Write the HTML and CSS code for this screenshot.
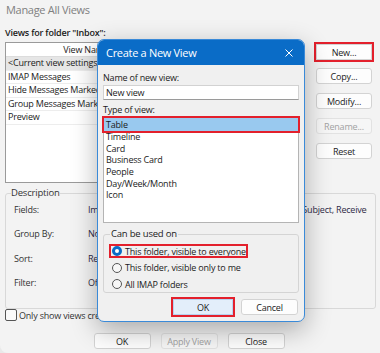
FILE: index.html
```html
<!DOCTYPE html>
<html>
  <head>
    <meta name="viewport" content="width=device-width, initial-scale=1.0">
    <link rel="stylesheet" href="styles.css">
  </head>
  <body>
    <div class="window">
      <div class="win-title">Manage All Views</div>
      <div class="win-body">
        <div class="top">
          <div class="views">
            <div class="caption">Views for folder "Inbox":</div>
            <div class="view-list">
              <div class="list-head"><span class="col-name">View Name</span><span>Can Be Used On</span></div>
              <div class="list-row current">&lt;Current view settings&gt;</div>
              <div class="list-row">IMAP Messages</div>
              <div class="list-row">Hide Messages Marked for Deletion</div>
              <div class="list-row">Group Messages Marked for Deletion</div>
              <div class="list-row">Preview</div>
            </div>
          </div>
          <div class="side-buttons">
            <button class="btn marked">New...</button>
            <button class="btn">Copy...</button>
            <button class="btn">Modify...</button>
            <button class="btn" disabled>Rename...</button>
            <button class="btn">Reset</button>
          </div>
        </div>
        <fieldset class="description">
          <legend>Description</legend>
          <div class="desc-row"><span class="desc-label">Fields:</span><span class="desc-value">Importance, Reminder, Icon, Flag Status, Attachment, Subject, Received, Size, Categories, Mention</span></div>
          <div class="desc-row"><span class="desc-label">Group By:</span><span class="desc-value">None</span></div>
          <div class="desc-row"><span class="desc-label">Sort:</span><span class="desc-value">Received (descending)</span></div>
          <div class="desc-row"><span class="desc-label">Filter:</span><span class="desc-value">Off</span></div>
        </fieldset>
        <div class="only-show"><span class="checkbox"></span>Only show views created for this folder</div>
        <div class="footer">
          <button class="btn wide">OK</button>
          <button class="btn wide" disabled>Apply View</button>
          <button class="btn wide">Close</button>
        </div>
      </div>

      <div class="dialog">
        <div class="dlg-title">
          <span>Create a New View</span>
          <svg class="dlg-close" width="8" height="8" viewBox="0 0 8 8"><path d="M0.5 0.5 L7.5 7.5 M7.5 0.5 L0.5 7.5" stroke="#fff" stroke-width="1"/></svg>
        </div>
        <div class="dlg-body">
          <div class="field-label">Name of new view:</div>
          <div class="text-input">New view</div>
          <div class="field-label">Type of view:</div>
          <div class="type-list">
            <div class="type-item selected">Table</div>
            <div class="type-item">Timeline</div>
            <div class="type-item">Card</div>
            <div class="type-item">Business Card</div>
            <div class="type-item">People</div>
            <div class="type-item">Day/Week/Month</div>
            <div class="type-item">Icon</div>
          </div>
          <fieldset class="used-on">
            <legend>Can be used on</legend>
            <div class="radio-row marked"><span class="radio checked"></span>This folder, visible to everyone</div>
            <div class="radio-row"><span class="radio"></span>This folder, visible only to me</div>
            <div class="radio-row"><span class="radio"></span>All IMAP folders</div>
          </fieldset>
          <div class="dlg-buttons">
            <button class="btn ok marked">OK</button>
            <button class="btn cancel">Cancel</button>
          </div>
        </div>
      </div>
    </div>
  </body>
</html>
```

FILE: styles.css
```css
/* Base */
body {
  margin: 0;
  background: #e9e9e9;
  font-family: "Segoe UI", "Open Sans", sans-serif;
  font-size: 9px;
  letter-spacing: -0.2px;
  color: #1b1b1b;
}
.window {
  position: relative;
  width: 380px;
  height: 353px;
  background: #f3f3f3;
  overflow: hidden;
  border-bottom-left-radius: 8px;
}
.win-title {
  height: 20px;
  line-height: 20px;
  padding-left: 6px;
  font-size: 11px;
  letter-spacing: -0.3px;
  color: #808080;
}
.win-body {
  padding: 0 7px 0 5px;
}

/* List of views + side buttons */
.top {
  display: flex;
}
.views {
  width: 298px;
}
.caption {
  padding-top: 6px;
  line-height: 14px;
  font-weight: 600;
}
.view-list {
  margin-top: 2px;
  height: 139px;
  background: #fff;
  border: 1px solid #9a9a9a;
}
.list-head {
  display: flex;
  height: 13px;
  line-height: 13px;
  border-bottom: 1px solid #dcdcdc;
}
.list-head .col-name {
  width: 160px;
  text-align: center;
  border-right: 1px solid #dcdcdc;
}
.list-head span + span {
  padding-left: 6px;
}
.list-row {
  height: 12.6px;
  line-height: 12.6px;
  padding-left: 2px;
  border-bottom: 1px solid #ededed;
  white-space: nowrap;
}
.list-row.current {
  background: #e6e6e6;
}
.side-buttons {
  display: flex;
  flex-direction: column;
  gap: 9px;
  margin-left: auto;
  margin-right: 1px;
  padding-top: 23px;
}
.side-buttons .btn {
  width: 56px;
}
.side-buttons .btn.marked {
  margin-top: 1px;
  margin-bottom: -1px;
}

/* Buttons */
.btn {
  height: 16px;
  padding: 0;
  font: inherit;
  letter-spacing: inherit;
  color: #1b1b1b;
  background: #fdfdfd;
  border: 1px solid #d3d3d3;
  border-radius: 3px;
}
.btn:disabled {
  color: #a2a2a2;
  background: #f6f6f6;
  border-color: #e2e2e2;
}
.btn.marked {
  border-radius: 0;
  outline: 2px solid #e3202c;
  outline-offset: 0;
}
.btn.wide {
  width: 57px;
}

/* Description group */
.description {
  margin: 4px 0 0;
  padding: 4px 8px 18px;
  border: 1px solid #d8d8d8;
  border-radius: 3px;
  display: flex;
  flex-direction: column;
  gap: 10.4px;
}
.description legend {
  margin-left: -3px;
  padding: 0;
  line-height: 12px;
  font-size: 9.5px;
  color: #333;
}
.desc-row {
  display: flex;
  line-height: 14px;
}
.desc-label {
  width: 74px;
  flex: none;
  color: #333;
}
.desc-value {
  width: 279px;
  overflow: hidden;
  white-space: nowrap;
  color: #2e2a45;
}
.only-show {
  display: flex;
  align-items: center;
  height: 12px;
  margin-top: 0;
  color: #333;
}
.checkbox {
  width: 10px;
  height: 10px;
  margin-right: 2px;
  border: 1px solid #555;
  border-radius: 2px;
  background: #fafafa;
}
.footer {
  display: flex;
  justify-content: center;
  gap: 10px;
  margin-top: 12px;
}

/* Create a New View dialog (floats over the window) */
.dialog {
  position: absolute;
  left: 97px;
  top: 39px;
  width: 206px;
  height: 281px;
  background: #f0f0f0;
  border: 1px solid #3a8ad8;
  border-radius: 7px;
  overflow: hidden;
  box-shadow: 0 8px 26px rgba(0, 0, 0, 0.3);
}
.dlg-title {
  display: flex;
  align-items: center;
  height: 25px;
  padding: 0 11px 0 8px;
  background: #0a6cc7;
  color: #fff;
  font-size: 11px;
  letter-spacing: -0.3px;
}
.dlg-close {
  margin-left: auto;
}
.dlg-body {
  padding: 0 5px 0 5px;
}
.field-label {
  margin-top: 7px;
  line-height: 12px;
}
.text-input {
  margin-top: 1px;
  height: 13px;
  line-height: 13px;
  padding-left: 2px;
  background: #fff;
  border: 1px solid #d2d2d2;
  border-bottom-color: #9a9a9a;
}
.text-input + .field-label {
  margin-top: 4px;
}
.type-list {
  height: 104px;
  padding-top: 1px;
  background: #fff;
  border: 1px solid #b4b4b4;
}
.type-item {
  height: 11.7px;
  line-height: 11.7px;
  padding-left: 2px;
}
.type-item.selected {
  height: 13px;
  line-height: 13px;
  background: #99c9ef;
  outline: 2px solid #e3202c;
}
.used-on {
  margin: 5px 0 0;
  padding: 5px 6px 2px;
  border: 1px solid #d4d4d4;
  border-radius: 3px;
  display: flex;
  flex-direction: column;
  gap: 4.5px;
}
.used-on legend {
  padding: 0 1px;
  line-height: 12px;
  font-size: 9.5px;
}
.radio-row {
  display: flex;
  align-items: center;
  width: max-content;
  height: 12px;
  padding-right: 1px;
  white-space: nowrap;
}
.radio-row.marked {
  outline: 2px solid #e3202c;
  outline-offset: -1px;
}
.radio {
  box-sizing: border-box;
  width: 10px;
  height: 10px;
  margin: 0 3px 0 2px;
  border: 1px solid #555;
  border-radius: 50%;
  background: #f7f7f7;
}
.radio.checked {
  border: 3px solid #0a6cc7;
  background: #fff;
}
.dlg-buttons {
  display: flex;
  justify-content: flex-end;
  gap: 8px;
  margin-top: 6px;
  padding-right: 1px;
}
.dlg-buttons .ok {
  width: 60px;
  background: #e3eefa;
  border-color: #b6d3f0;
}
.dlg-buttons .cancel {
  width: 57px;
}
```
